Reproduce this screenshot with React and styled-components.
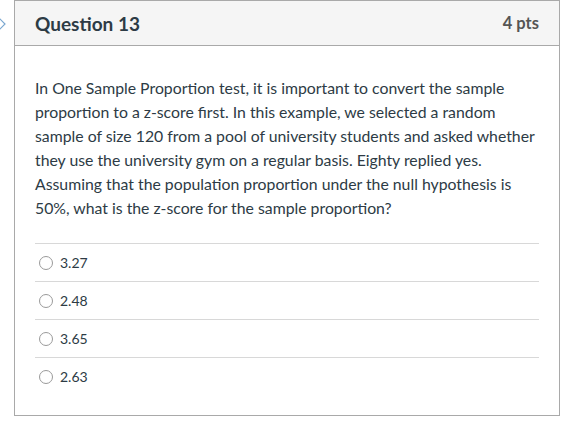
import React from 'react';
import styled, { createGlobalStyle } from 'styled-components';

const GlobalStyle = createGlobalStyle`
body {
  margin: 0;
  background: #fff;
  font-family: Lato, "Open Sans", sans-serif;
  color: #2d3b45;
}
`;

const Page = styled.div`
display: flex;
align-items: flex-start;
width: 576px;
`;

const Marker = styled.div`
width: 14px;
flex: none;
padding-top: 15px;
`;

const Card = styled.div`
width: 544px;
border: 1px solid #a9a9a9;
background: #fff;
`;

const Header = styled.div`
display: flex;
justify-content: space-between;
align-items: center;
height: 44px;
padding: 0 20px 0 20px;
background: #f5f5f5;
border-bottom: 1px solid #a9a9a9;
`;

const Title = styled.h2`
margin: 0;
font-size: 19px;
font-weight: 700;
color: #2d3b45;
`;

const Points = styled.span`
font-size: 16.5px;
font-weight: 700;
color: #555;
`;

const Body = styled.div`
padding: 30px 20px 20px 20px;
`;

const Prompt = styled.p`
margin: 0;
font-size: 15.8px;
line-height: 24px;
color: #2d3b45;
`;

const Answers = styled.div`
margin-top: 23px;
`;

const Row = styled.label`
display: flex;
align-items: center;
height: 37px;
border-top: 1px solid #d8d8d8;
padding-left: 4px;
`;

const Radio = styled.span`
width: 12px;
height: 12px;
border-radius: 50%;
border: 1px solid #9a9a9a;
margin-right: 7px;
flex: none;
`;

const AnswerText = styled.span`
font-size: 14px;
color: #2d3b45;
`;

const answers = ['3.27', '2.48', '3.65', '2.63'];

export default function App() {
  return (
    <Page>
      <GlobalStyle />
      <Marker>
        <svg width="8" height="14" viewBox="0 0 8 14">
          <path d="M-1 1 L5 7 L-1 13" fill="none" stroke="#7aa7d0" strokeWidth="1.2" />
        </svg>
      </Marker>
      <Card>
        <Header>
          <Title>Question 13</Title>
          <Points>4 pts</Points>
        </Header>
        <Body>
          <Prompt>
            In One Sample Proportion test, it is important to convert the sample
            proportion to a z-score first. In this example, we selected a random
            sample of size 120 from a pool of university students and asked whether
            they use the university gym on a regular basis. Eighty replied yes.
            Assuming that the population proportion under the null hypothesis is
            50%, what is the z-score for the sample proportion?
          </Prompt>
          <Answers>
            {answers.map((a) => (
              <Row key={a}>
                <Radio />
                <AnswerText>{a}</AnswerText>
              </Row>
            ))}
          </Answers>
        </Body>
      </Card>
    </Page>
  );
}
